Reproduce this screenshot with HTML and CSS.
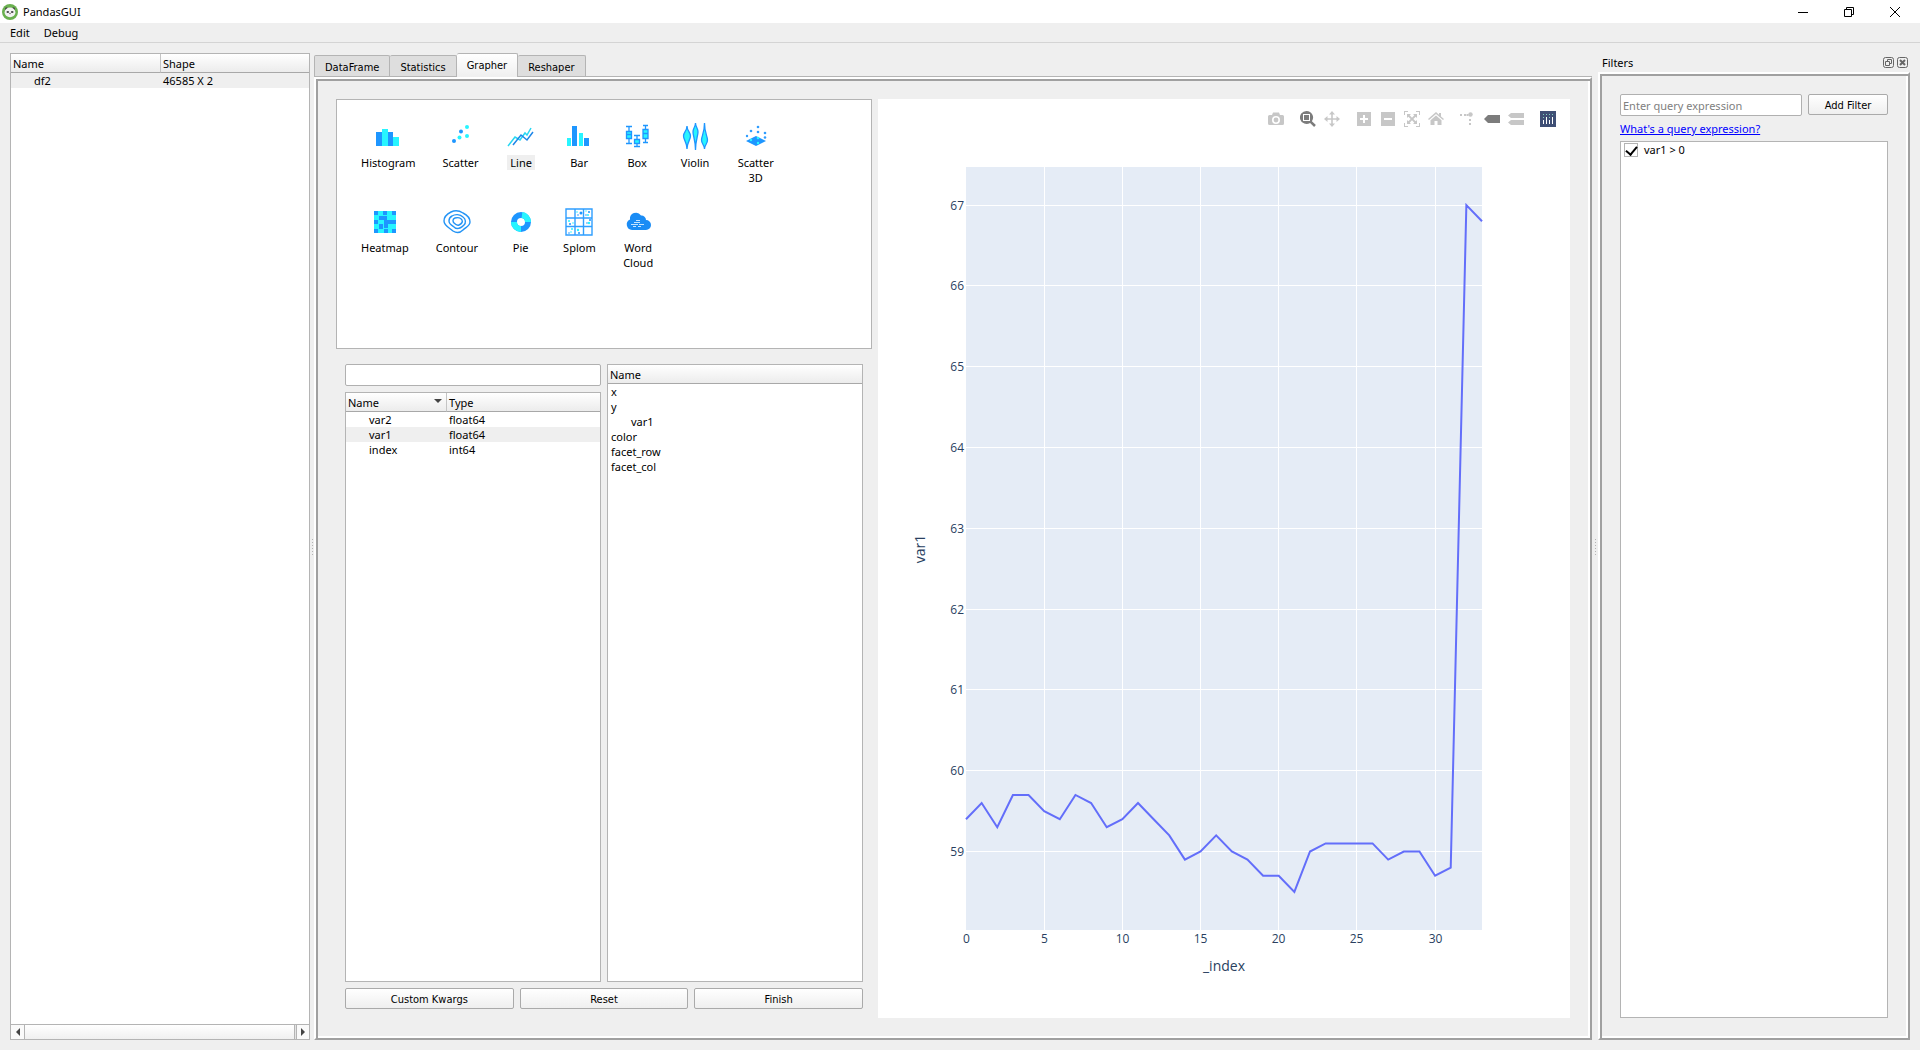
FILE: index.html
```html
<!DOCTYPE html>
<html lang="en">
<head>
    <meta charset="UTF-8">
    <meta name="viewport" content="width=device-width, initial-scale=1.0">
    <title>PandasGUI</title>
    <link rel="stylesheet" href="styles.css">
</head>
<body>
    <header class="titlebar">
        <svg class="app-icon" viewBox="0 0 16 16">
            <circle cx="8" cy="8" r="8" fill="#6ab04f"/>
            <circle cx="4.500" cy="4.800" r="1.500" fill="#444"/>
            <circle cx="11.500" cy="4.800" r="1.500" fill="#444"/>
            <ellipse cx="8" cy="8.400" rx="5.400" ry="4.800" fill="#f2f2f2"/>
            <ellipse cx="5.800" cy="8" rx="1.300" ry="1" fill="#444"/>
            <ellipse cx="10.200" cy="8" rx="1.300" ry="1" fill="#444"/>
            <circle cx="8" cy="9.500" r="0.700" fill="#555"/>
        </svg>
        <span class="app-title">PandasGUI</span>
        <div class="window-buttons">
            <button aria-label="Minimize"><svg viewBox="0 0 10 10"><path d="M0 5.500h10"/></svg></button>
            <button aria-label="Restore"><svg viewBox="0 0 10 10"><path d="M.5 2.500h7v7h-7zM2.500 2.500v-2h7v7h-2"/></svg></button>
            <button aria-label="Close"><svg viewBox="0 0 10 10"><path d="M0 0l10 10M10 0L0 10"/></svg></button>
        </div>
    </header>

    <nav class="menubar">
        <button>Edit</button>
        <button>Debug</button>
    </nav>

    <main class="workspace">
        <section class="navigator">
            <div class="view">
                <table class="tree">
                    <thead>
                        <tr><th class="half">Name</th><th>Shape</th></tr>
                    </thead>
                    <tbody>
                        <tr class="selected"><td class="child">df2</td><td>46585 X 2</td></tr>
                    </tbody>
                </table>
            </div>
            <div class="scrollbar">
                <button aria-label="Scroll left"><svg viewBox="0 0 4 8"><path d="M4 0v8L0 4z"/></svg></button>
                <div class="thumb"></div>
                <button aria-label="Scroll right"><svg viewBox="0 0 4 8"><path d="M0 0v8l4-4z"/></svg></button>
            </div>
        </section>

        <div class="splitter"></div>

        <section class="tabs">
            <div class="tab-bar" role="tablist">
                <button class="tab" role="tab">DataFrame</button>
                <button class="tab" role="tab">Statistics</button>
                <button class="tab active" role="tab" aria-selected="true">Grapher</button>
                <button class="tab" role="tab">Reshaper</button>
            </div>
            <div class="frame grapher">
                <div class="settings">
                    <div class="plot-types">
                        <button class="plot-type">
                            <svg viewBox="0 0 28 28">
                                <path fill="#1e96ff" d="M2 9h6v14H2zM14 9h5v14h-5z"/>
                                <path fill="#27f5ff" d="M8 6h6v17H8zM19 14h6v9h-6z"/>
                            </svg>
                            Histogram
                        </button>
                        <button class="plot-type">
                            <svg viewBox="0 0 28 28">
                                <g fill="#1e96ff"><circle cx="7" cy="18" r="2"/><circle cx="14" cy="8.500" r="2"/></g>
                                <g fill="#27f5ff"><circle cx="12.500" cy="14.500" r="2"/><circle cx="20" cy="4" r="2"/><circle cx="20" cy="13" r="2"/></g>
                            </svg>
                            Scatter
                        </button>
                        <button class="plot-type current">
                            <svg viewBox="0 0 28 28" fill="none" stroke-width="1.500">
                                <path stroke="#27d7f2" d="M1 23l7-9 5 3 5-7 2 2 4-7"/>
                                <path stroke="#1e86e8" d="M6 22l8-10 6 5 6-8"/>
                            </svg>
                            <span>Line</span>
                        </button>
                        <button class="plot-type">
                            <svg viewBox="0 0 28 28">
                                <path fill="#27f5ff" d="M2 15h4v8H2zM14 10h4v13h-4z"/>
                                <path fill="#1e96ff" d="M7 3h5v20H7zM19 15h5v8h-5z"/>
                            </svg>
                            Bar
                        </button>
                        <button class="plot-type">
                            <svg viewBox="0 0 28 28" fill="#27f5ff" stroke="#1e96ff" stroke-width="1.300">
                                <path d="M3 3.500h6M6 3.500v17M3 20.500h6M11 12.500h6M14 12.500v11M11 23.500h6M20 2.500h5M22.500 2.500v17M20 19.500h5"/>
                                <path d="M3.500 8.500h5v7h-5zM3.500 11.500h5M11.500 16.500h5v4h-5zM20 6.500h5v9h-5zM20 10.500h5"/>
                            </svg>
                            Box
                        </button>
                        <button class="plot-type">
                            <svg viewBox="0 0 28 28" fill="#27f5ff" stroke="#1e96ff" stroke-width="1.300">
                                <path d="M6 3c0 5-3.500 6-3.500 10S6 19 6 26c0-7 3.500-9 3.500-13S6 8 6 3z"/>
                                <path d="M14.500 0c0 4-2.500 5-2.500 9s2.500 8 2.500 18c0-10 2.500-14 2.500-18s-2.500-5-2.500-9z"/>
                                <path d="M23.500 0c0 10-3 13-3 17s3 5 3 9c0-4 3-5 3-9s-3-7-3-17z"/>
                            </svg>
                            Violin
                        </button>
                        <button class="plot-type">
                            <svg viewBox="0 0 28 28">
                                <path fill="#1e96ff" d="M14 13l10 5-10 5-10-5z"/>
                                <g fill="#2f9dff"><circle cx="5" cy="13" r="1.200"/><circle cx="9" cy="8" r="1.300"/><circle cx="16" cy="4" r="1.300"/><circle cx="16" cy="9" r="1.300"/><circle cx="23" cy="10" r="1.300"/><circle cx="23" cy="14.500" r="1.300"/></g>
                                <g fill="#27f5ff"><circle cx="16" cy="15" r="1.300"/><circle cx="9" cy="17" r="1.200"/><circle cx="16" cy="20" r="1.200"/></g>
                            </svg>
                            Scatter 3D
                        </button>
                        <button class="plot-type">
                            <svg viewBox="0 0 28 28">
                                <path fill="#27f5ff" d="M3 3h22v22H3z"/>
                                <path fill="#1e96ff" d="M3 3h4v4H3zM12 3h4v4h-4zM21 3h4v4h-4zM8 8h8v4H8zM17 12h8v4h-8zM3 12h4v4H3zM8 16h4v5H8zM13 12h4v8h-4zM3 21h4v4H3zM13 21h4v4h-4zM21 21h4v4h-4z"/>
                            </svg>
                            Heatmap
                        </button>
                        <button class="plot-type">
                            <svg viewBox="0 0 28 28" fill="none" stroke="#2494f5" stroke-width="1.400">
                                <path d="M8 4c4-2 9-1 12 1 4 2 7 5 7 9s-4 5-7 8-7 3-10 1c-3-3-9-5-9-10 0-4 3-7 7-9z"/>
                                <path d="M9 8c3-2 8-2 11 1 3 2 3 6 1 8-3 3-7 5-10 2-3-2-5-3-5-6 0-2 1-4 3-5z"/>
                                <path d="M12 10c3-1 6 0 7 2s-1 4-3 5-4-1-5-2-2-4 1-5z"/>
                            </svg>
                            Contour
                        </button>
                        <button class="plot-type">
                            <svg viewBox="0 0 28 28" fill="none" stroke-width="6">
                                <circle cx="14" cy="14" r="7" stroke="#1e96ff"/>
                                <path stroke="#27f5ff" d="M15 7a7 7 0 0 1 6 7M14 21a7 7 0 0 1-7-7"/>
                            </svg>
                            Pie
                        </button>
                        <button class="plot-type">
                            <svg viewBox="0 0 28 28" fill="none">
                                <path stroke="#2f9fff" stroke-width="1.400" d="M1 1h26v26H1zM10 1v26M18.500 1v26M1 10h26M1 18.500h26"/>
                                <g fill="#1e96ff"><circle cx="16" cy="5" r="1.500"/><circle cx="13" cy="7" r=".8"/><circle cx="24" cy="4" r="1"/><circle cx="21" cy="7" r=".8"/><circle cx="5" cy="16" r="1"/><circle cx="22" cy="15" r=".8"/><circle cx="25" cy="12" r="1"/><circle cx="4" cy="25" r=".8"/><circle cx="14" cy="25" r="1"/></g>
                                <g fill="#27f5ff"><circle cx="12" cy="4" r=".8"/><circle cx="23" cy="7" r="1"/><circle cx="21" cy="3" r=".7"/><circle cx="4" cy="13" r="1"/><circle cx="8" cy="15" r=".8"/><circle cx="24" cy="15" r="1.200"/><circle cx="7" cy="21" r="1"/><circle cx="6" cy="24" r=".8"/><circle cx="13" cy="22" r="1.200"/></g>
                            </svg>
                            Splom
                        </button>
                        <button class="plot-type">
                            <svg viewBox="0 0 28 28">
                                <path fill="#1a8cf5" d="M8 22a5.500 5.500 0 0 1-2-10.500 6 6 0 0 1 11-4 4.500 4.500 0 0 1 5 4.500 5 5 0 0 1 0 10z"/>
                                <path fill="#c6e4ff" d="M12 12h4v1h-4zM10 14h6v1h-6zM7 16h7v1H7zM15 16h5v1h-5zM9 18h3v1H9zM14 18h3v1h-3z"/>
                            </svg>
                            Word Cloud
                        </button>
                    </div>

                    <div class="arguments">
                        <div class="columns">
                            <div class="source">
                                <input class="text-box" type="text" aria-label="Search columns">
                                <div class="view">
                                    <table class="tree">
                                        <thead>
                                            <tr>
                                                <th class="column-name"><span>Name</span><svg viewBox="0 0 8 4"><path d="M0 0h8L4 4z"/></svg></th>
                                                <th>Type</th>
                                            </tr>
                                        </thead>
                                        <tbody>
                                            <tr><td class="child">var2</td><td>float64</td></tr>
                                            <tr class="selected"><td class="child">var1</td><td>float64</td></tr>
                                            <tr><td class="child">index</td><td>int64</td></tr>
                                        </tbody>
                                    </table>
                                </div>
                            </div>
                            <div class="view">
                                <table class="tree">
                                    <thead>
                                        <tr><th>Name</th></tr>
                                    </thead>
                                    <tbody>
                                        <tr><td>x</td></tr>
                                        <tr><td>y</td></tr>
                                        <tr><td class="child">var1</td></tr>
                                        <tr><td>color</td></tr>
                                        <tr><td>facet_row</td></tr>
                                        <tr><td>facet_col</td></tr>
                                    </tbody>
                                </table>
                            </div>
                        </div>
                        <div class="actions">
                            <button class="push">Custom Kwargs</button>
                            <button class="push">Reset</button>
                            <button class="push">Finish</button>
                        </div>
                    </div>
                </div>

                <div class="plot">
                    <svg class="chart" id="chart" viewBox="0 0 692 919">
                        <rect x="88" y="68" width="516" height="763" fill="#e5ecf6"/>
                        <g id="grid" stroke="#fff"></g>
                        <polyline id="line" fill="none" stroke="#636efa" stroke-width="2"/>
                        <g id="ticks"></g>
                        <text class="axis-title" x="346" y="872" text-anchor="middle">_index</text>
                        <text class="axis-title" transform="translate(47 450) rotate(-90)" text-anchor="middle">var1</text>
                    </svg>
                    <div class="modebar">
                        <div class="modebar-group">
                            <button aria-label="Download plot"><svg viewBox="0 0 16 16"><path fill-rule="evenodd" d="M1.500 4H4l1-2.500h6L12 4h2.500A1.500 1.500 0 0 1 16 5.500v7a1.500 1.500 0 0 1-1.500 1.500h-13A1.500 1.500 0 0 1 0 12.500v-7A1.500 1.500 0 0 1 1.500 4zM8 5a4 4 0 1 0 0 8 4 4 0 0 0 0-8zm0 1.600a2.400 2.400 0 1 1 0 4.800 2.400 2.400 0 0 1 0-4.800z"/></svg></button>
                        </div>
                        <div class="modebar-group">
                            <button class="on" aria-label="Zoom"><svg viewBox="0 0 16 16"><path fill-rule="evenodd" d="M6.500 0a6.500 6.500 0 0 1 5.400 10.200l4 3.900-1.800 1.800-4-4A6.500 6.500 0 1 1 6.500 0zM3 3v7h7V3zM4 4h5v5H4z"/><path d="M4.500 4.500h4v4h-4z"/></svg></button>
                            <button aria-label="Pan"><svg viewBox="0 0 16 16"><path d="M8 0l3 3.500H8.800v3.700h3.700V5L16 8l-3.500 3V8.800H8.800v3.700H11L8 16l-3-3.500h2.200V8.800H3.500V11L0 8l3.500-3v2.200h3.700V3.500H5z"/></svg></button>
                        </div>
                        <div class="modebar-group">
                            <button aria-label="Zoom in"><svg viewBox="0 0 16 16"><path fill-rule="evenodd" d="M1 1h14v14H1zM7 4v3H4v2h3v3h2V9h3V7H9V4z"/></svg></button>
                            <button aria-label="Zoom out"><svg viewBox="0 0 16 16"><path fill-rule="evenodd" d="M1 1h14v14H1zM4 7v2h8V7z"/></svg></button>
                            <button aria-label="Autoscale"><svg viewBox="0 0 16 16"><path d="M0 0h4v1H1v3H0zM12 0h4v4h-1V1h-3zM0 12h1v3h3v1H0zM15 12h1v4h-4v-1h3zM3 3h4L5.700 4.300 8 6.700l2.300-2.400L9 3h4v4l-1.300-1.300L9.300 8l2.400 2.300L13 9v4H9l1.300-1.300L8 9.300l-2.300 2.400L7 13H3V9l1.300 1.300L6.700 8 4.300 5.700 3 7z"/></svg></button>
                            <button aria-label="Reset axes"><svg viewBox="0 0 16 16"><path d="M8 1l3 2.700V2h2v3.500L16 8l-1 1-7-6-7 6-1-1zM8 4.500l5.500 4.700V14H9.500v-4h-3v4h-4V9.200z"/></svg></button>
                        </div>
                        <div class="modebar-group">
                            <button aria-label="Toggle spike lines"><svg viewBox="0 0 16 16"><path d="M0 3h2v2H0zM4 3h2v2H4zM9 8h2v2H9zM9 12h2v2H9zM6.500 3h2v2h-2z"/><circle cx="10.500" cy="3.500" r="2.200"/></svg></button>
                            <button class="on" aria-label="Show closest data on hover"><svg viewBox="0 0 16 16"><path d="M4 4h12v8H4L0 8z"/></svg></button>
                            <button aria-label="Compare data on hover"><svg viewBox="0 0 16 16"><path d="M3 2h13v5H3L0 4.500zM3 9h13v5H3L0 11.500z"/></svg></button>
                        </div>
                        <div class="modebar-group">
                            <a href="https://plotly.com/" aria-label="Produced with Plotly"><svg viewBox="0 0 16 16"><path fill="#3f4f75" d="M0 0h16v16H0z"/><path fill="#80cfbe" d="M3 3h1v1H3zM6 3h1v1H6zM9 3h1v1H9zM12 3h1v1h-1zM3 6h1v1H3zM9 6h1v1H9z"/><path fill="#fff" d="M3 9h1v4H3zM6 6h1v7H6zM9 9h1v4H9zM12 6h1v7h-1z"/></svg></a>
                        </div>
                    </div>
                </div>
            </div>
        </section>

        <div class="splitter wide"></div>

        <section class="filters">
            <div class="dock-title">
                <span>Filters</span>
                <button aria-label="Float"><svg viewBox="0 0 11 11"><rect x=".5" y=".5" width="10" height="10" rx="2"/><path d="M2.500 4.500h4v4h-4zM4.500 4.500v-2h4v4h-2"/></svg></button>
                <button aria-label="Close dock"><svg viewBox="0 0 11 11"><rect x=".5" y=".5" width="10" height="10" rx="2"/><path stroke-width="2" d="M3 3l5 5M8 3L3 8"/></svg></button>
            </div>
            <div class="frame filter-panel">
                <div class="query">
                    <input class="text-box" type="text" placeholder="Enter query expression" aria-label="Query expression">
                    <button class="push">Add Filter</button>
                </div>
                <a class="help" href="#">What's a query expression?</a>
                <div class="view">
                    <label class="filter"><input type="checkbox" checked>var1 &gt; 0</label>
                </div>
            </div>
        </section>
    </main>

    <script>
        const values = [59.4, 59.6, 59.3, 59.7, 59.7, 59.5, 59.4, 59.7, 59.6, 59.3, 59.4, 59.6,
            59.4, 59.2, 58.9, 59, 59.2, 59, 58.9, 58.7, 58.7, 58.5, 59, 59.1, 59.1, 59.1, 59.1,
            58.9, 59, 59, 58.7, 58.8, 67, 66.8]
        const grid = document.getElementById('grid')
        const ticks = document.getElementById('ticks')

        const xPos = i => 88 + i * 516 / 33
        const yPos = v => 752.5 - (v - 59) * 80.8

        function add(parent, name, attrs, text) {
            const el = document.createElementNS('http://www.w3.org/2000/svg', name)
            for (const key in attrs) el.setAttribute(key, attrs[key])
            if (text !== undefined) el.textContent = text
            parent.appendChild(el)
        }

        for (let i = 0; i <= 30; i += 5) {
            const x = Math.floor(xPos(i)) + 0.5
            if (i > 0) add(grid, 'line', { x1: x, x2: x, y1: 68, y2: 831 })
            add(ticks, 'text', { x: x, y: 844, 'text-anchor': 'middle' }, i)
        }
        for (let v = 59; v <= 67; v++) {
            const y = Math.floor(yPos(v)) + 0.5
            add(grid, 'line', { x1: 88, x2: 604, y1: y, y2: y })
            add(ticks, 'text', { x: 86, y: y + 4, 'text-anchor': 'end' }, v)
        }

        document.getElementById('line').setAttribute('points',
            values.map((v, i) => xPos(i) + ',' + yPos(v)).join(' '))
    </script>
</body>
</html>
```
FILE: styles.css
```css
* {
    margin: 0;
    padding: 0;
    box-sizing: border-box;
}
body {
    display: flex;
    flex-direction: column;
    min-height: 100vh;
    font-family: "Noto Sans", "Open Sans", sans-serif;
    font-size: 11px;
    line-height: 15px;
    color: #000;
    background-color: #efefef;
}
button {
    font: inherit;
    color: inherit;
    background: none;
    border: none;
}
svg {
    display: block;
}

/* window chrome */
.titlebar {
    display: flex;
    align-items: center;
    height: 23px;
    padding-left: 2px;
    background-color: #fff;
}
.app-icon {
    width: 16px;
    height: 16px;
}
.app-title {
    flex: 1;
    padding-left: 5px;
}
.window-buttons {
    display: flex;
}
.window-buttons button {
    width: 46px;
    height: 20px;
    display: flex;
    align-items: center;
    justify-content: center;
}
.window-buttons button:last-child {
    margin-right: 2px;
}
.window-buttons svg {
    width: 10px;
    height: 10px;
    fill: none;
    stroke: #000;
    overflow: visible;
}
.menubar {
    display: flex;
    gap: 14px;
    height: 20px;
    padding-left: 10px;
    border-bottom: 1px solid #d4d4d4;
}

.workspace {
    flex: 1;
    display: flex;
    padding: 10px;
}
.splitter {
    width: 4px;
    display: flex;
    align-items: center;
    justify-content: center;
}
.splitter.wide {
    width: 6px;
}
.splitter::before {
    content: "";
    width: 1px;
    height: 16px;
    background: repeating-linear-gradient(#b4b4b4 0 1px, transparent 1px 3px);
}

/* item views */
.view {
    flex: 1;
    background-color: #fff;
    border: 1px solid #b4b4b4;
}
.tree {
    width: 100%;
    border-collapse: separate;
    border-spacing: 0;
    table-layout: fixed;
}
.tree th {
    height: 19px;
    padding: 0 2px;
    text-align: left;
    font-weight: normal;
    background: linear-gradient(#fff, #ececec);
    border-bottom: 1px solid #a8a8a8;
}
.tree th + th {
    border-left: 1px solid #c4c4c4;
}
.tree td {
    height: 15px;
    padding: 0 3px;
}
.tree td.child {
    padding-left: 23px;
}
.tree .selected {
    background-color: #efefef;
}
.tree .half {
    width: 50%;
}
.tree .column-name {
    width: 100px;
}
.column-name span {
    float: left;
}
.column-name svg {
    float: right;
    width: 8px;
    height: 4px;
    margin: 4px 2px;
    fill: #444;
}

.navigator {
    width: 300px;
    display: flex;
    flex-direction: column;
}
.scrollbar {
    display: flex;
    height: 15px;
    background-color: #e4e4e4;
    border: 1px solid #b4b4b4;
    border-top: none;
}
.scrollbar button {
    width: 13px;
    display: flex;
    align-items: center;
    justify-content: center;
    background-color: #fafafa;
}
.scrollbar svg {
    width: 4px;
    height: 8px;
    fill: #444;
}
.scrollbar button:last-child {
    border-left: 1px solid #b4b4b4;
}
.thumb {
    flex: 1;
    margin-right: 1px;
    background: linear-gradient(#fff, #f0f0f0);
    border: solid #b4b4b4;
    border-width: 0 1px;
}

/* tabs */
.tabs {
    flex: 1;
    display: flex;
    flex-direction: column;
}
.tab-bar {
    display: flex;
    align-items: flex-end;
    height: 24px;
    border-bottom: 1px solid #b4b4b4;
    font-family: "DejaVu Sans Condensed", "DejaVu Sans", sans-serif;
}
.tab {
    height: 21px;
    padding: 2px 10px 0;
    background-color: #dedede;
    border: 1px solid #b4b4b4;
    border-left: none;
    border-bottom: none;
    border-radius: 2px 2px 0 0;
}
.tab:first-child {
    border-left: 1px solid #b4b4b4;
}
.tab.active {
    height: 24px;
    margin-bottom: -1px;
    padding-top: 0;
    background: linear-gradient(#fff, #efefef);
}
.frame {
    flex: 1;
    padding: 20px;
    border: 2px solid;
    border-color: #fff #a0a0a0 #a0a0a0 #fff;
    box-shadow: inset 2px 2px #a0a0a0, inset -2px -2px #fff;
}

/* grapher */
.grapher {
    display: grid;
    grid-template-columns: 536fr 692fr;
    gap: 6px;
}
.settings {
    display: flex;
    flex-direction: column;
}
.plot-types {
    display: flex;
    flex-wrap: wrap;
    align-content: flex-start;
    align-items: flex-start;
    gap: 23px 27px;
    height: 250px;
    padding: 23px 60px 0 24px;
    background-color: #fff;
    border: 1px solid #b4b4b4;
}
.plot-type {
    width: min-content;
    min-width: 31px;
    min-height: 61px;
    display: flex;
    flex-direction: column;
    align-items: center;
}
.plot-type svg {
    width: 28px;
    height: 28px;
    margin-bottom: 4px;
    overflow: visible;
}
.plot-type.current span {
    padding: 0 3px;
    background-color: #efefef;
}
.arguments {
    flex: 1;
    display: flex;
    flex-direction: column;
    gap: 6px;
    padding: 15px 9px 9px;
}
.columns {
    flex: 1;
    display: grid;
    grid-template-columns: 1fr 1fr;
    gap: 6px;
}
.source {
    display: flex;
    flex-direction: column;
    gap: 6px;
}
.actions {
    display: grid;
    grid-template-columns: repeat(3, 1fr);
    gap: 6px;
}
.text-box {
    height: 22px;
    padding: 0 2px;
    font: inherit;
    background-color: #fff;
    border: 1px solid #b0b0b0;
    border-radius: 2px;
}
.text-box::placeholder {
    color: #808080;
}
.push {
    height: 21px;
    padding-top: 1px;
    font-family: "DejaVu Sans Condensed", "DejaVu Sans", sans-serif;
    background: linear-gradient(#fff, #efefef);
    border: 1px solid #aaa;
    border-radius: 2px;
}

/* plot */
.plot {
    position: relative;
    background-color: #fff;
}
.chart {
    width: 100%;
    height: auto;
    font-family: "Open Sans", verdana, sans-serif;
    font-size: 12px;
    fill: #2a3f5f;
}
.axis-title {
    font-size: 14px;
}
.modebar {
    position: absolute;
    top: 12px;
    right: 10px;
    display: flex;
    gap: 8px;
}
.modebar-group {
    display: flex;
}
.modebar button,
.modebar a {
    padding: 0 4px;
}
.modebar svg {
    width: 16px;
    height: 16px;
    fill: #c7c7c7;
}
.modebar .on svg {
    fill: #7c7c7c;
}

/* filters */
.filters {
    width: 312px;
    display: flex;
    flex-direction: column;
}
.dock-title {
    display: flex;
    align-items: center;
    gap: 3px;
    height: 19px;
    padding: 0 2px 0 4px;
}
.dock-title span {
    flex: 1;
}
.dock-title svg {
    width: 11px;
    height: 11px;
    fill: none;
    stroke: #666;
}
.filter-panel {
    display: flex;
    flex-direction: column;
}
.query {
    display: flex;
    gap: 6px;
}
.query .text-box {
    flex: 1;
    min-width: 0;
}
.query .push {
    width: 80px;
}
.help {
    align-self: flex-start;
    margin: 5px 0;
    color: #00f;
}
.filter {
    display: flex;
    align-items: center;
    gap: 6px;
    padding: 0 3px;
}
.filter input {
    appearance: none;
    width: 14px;
    height: 14px;
    display: grid;
    place-items: center;
    border: 1px solid #b4b4b4;
}
.filter input:checked::after {
    content: "";
    width: 5px;
    height: 9px;
    border: solid #000;
    border-width: 0 2px 2px 0;
    transform: rotate(40deg);
}
```
